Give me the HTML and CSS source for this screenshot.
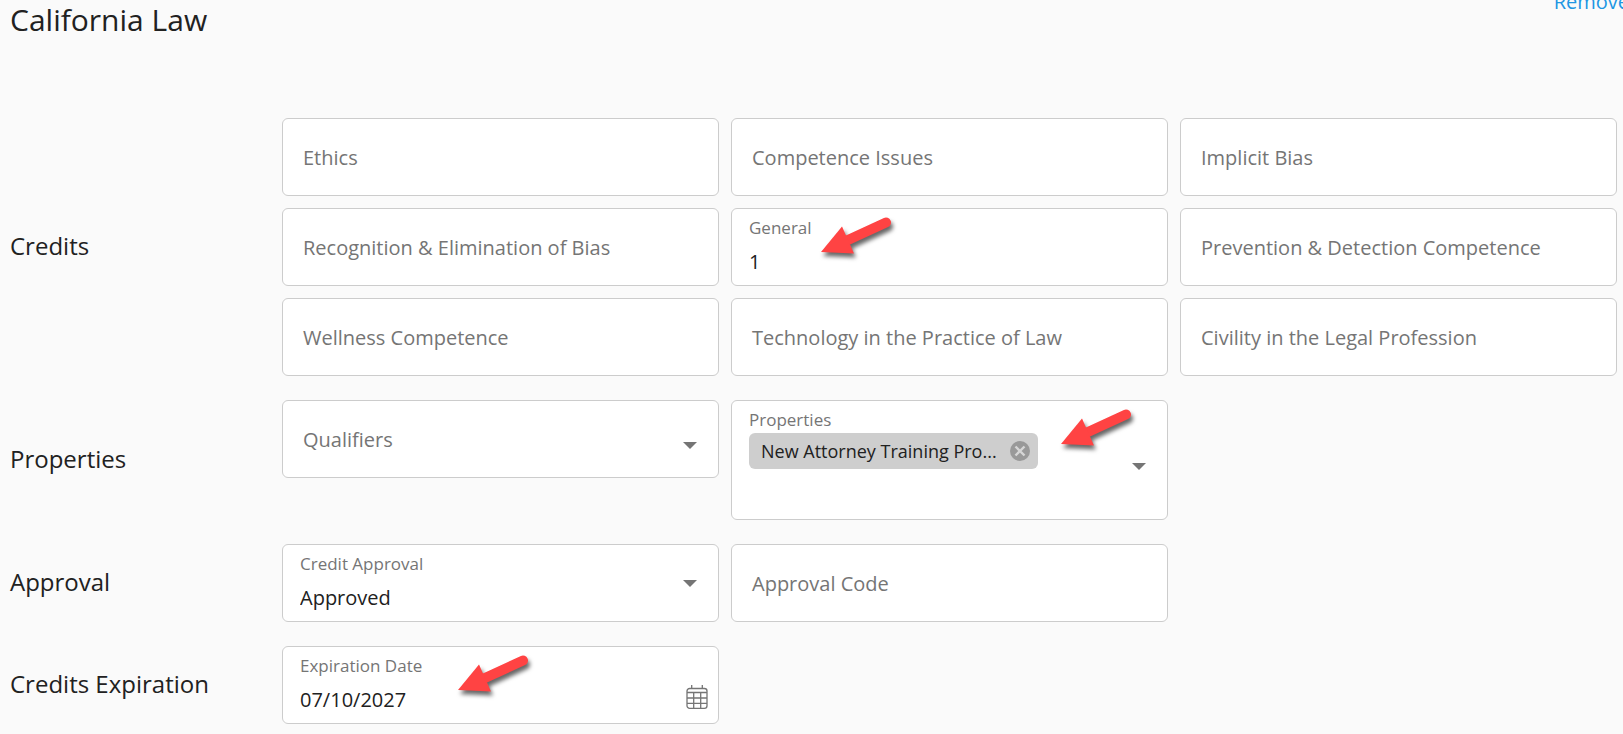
FILE: index.html
```html
<!DOCTYPE html>
<html lang="en">
<head>
<meta charset="utf-8">
<title>California Law</title>
<link rel="stylesheet" href="styles.css">
</head>
<body>
<svg class="defs" aria-hidden="true">
  <symbol id="arrow" viewBox="0 0 84 52">
    <path d="M31 24 69 6.5" fill="none" stroke="#ff4343" stroke-width="10" stroke-linecap="round"/>
    <path d="M4 36 25 10.5 37 37.5Z" fill="#ff4343"/>
  </symbol>
</svg>
<form class="page">
  <header class="header">
    <h1 class="title">California Law</h1>
    <a class="remove" href="#">Remove</a>
  </header>

  <section class="group">
    <h2 class="group-name">Credits</h2>
    <div class="fields">
      <label class="field empty"><span class="label">Ethics</span><input class="control" type="text"></label>
      <label class="field empty"><span class="label">Competence Issues</span><input class="control" type="text"></label>
      <label class="field empty"><span class="label">Implicit Bias</span><input class="control" type="text"></label>
      <label class="field empty"><span class="label">Recognition &amp; Elimination of Bias</span><input class="control" type="text"></label>
      <div class="field filled">
        <label class="label" for="general">General</label>
        <input class="control" id="general" type="text" value="1">
        <svg class="arrow arrow-general" aria-hidden="true"><use href="#arrow"/></svg>
      </div>
      <label class="field empty"><span class="label">Prevention &amp; Detection Competence</span><input class="control" type="text"></label>
      <label class="field empty"><span class="label">Wellness Competence</span><input class="control" type="text"></label>
      <label class="field empty"><span class="label">Technology in the Practice of Law</span><input class="control" type="text"></label>
      <label class="field empty"><span class="label">Civility in the Legal Profession</span><input class="control" type="text"></label>
    </div>
  </section>

  <section class="group">
    <h2 class="group-name">Properties</h2>
    <div class="fields">
      <label class="field empty multi">
        <span class="label">Qualifiers</span>
        <select class="control"><option value=""></option></select>
        <span class="caret"></span>
      </label>
      <div class="field filled multi">
        <label class="label" for="properties">Properties</label>
        <div class="chips">
          <span class="chip">
            <span class="chip-text">New Attorney Training Pro...</span>
            <button class="chip-remove" type="button" aria-label="Remove property">
              <svg viewBox="0 0 20 20" width="20" height="20" aria-hidden="true"><circle cx="10" cy="10" r="10" fill="#999"/><path d="M5.5 5.5 14.5 14.5M14.5 5.5 5.5 14.5" stroke="#d6d6d6" stroke-width="2.4"/></svg>
            </button>
          </span>
          <input class="control" id="properties" type="text" role="combobox" aria-expanded="false">
        </div>
        <span class="caret"></span>
        <svg class="arrow arrow-properties" aria-hidden="true"><use href="#arrow"/></svg>
      </div>
    </div>
  </section>

  <section class="group">
    <h2 class="group-name">Approval</h2>
    <div class="fields">
      <div class="field filled">
        <label class="label" for="approval">Credit Approval</label>
        <select class="control" id="approval"><option>Approved</option></select>
        <span class="caret"></span>
      </div>
      <label class="field empty"><span class="label">Approval Code</span><input class="control" type="text"></label>
    </div>
  </section>

  <section class="group">
    <h2 class="group-name">Credits Expiration</h2>
    <div class="fields">
      <div class="field filled">
        <label class="label" for="expiration">Expiration Date</label>
        <input class="control" id="expiration" type="text" value="07/10/2027">
        <button class="calendar" type="button" aria-label="Open calendar">
          <svg viewBox="0 0 22 24" width="22" height="24" fill="none" stroke="#757575" stroke-width="1.3" aria-hidden="true">
            <rect x="1" y="3.5" width="20" height="19.8" rx="2.6"/>
            <path d="M1 7.5H21M1 13H21M1 18.3H21M7.7 7.5V23.3M14.7 7.5V23.3M5.7 0V3.5M16.3 0V3.5"/>
          </svg>
        </button>
        <svg class="arrow arrow-expiration" aria-hidden="true"><use href="#arrow"/></svg>
      </div>
    </div>
  </section>
</form>
</body>
</html>
```
FILE: styles.css
```css
* {
  box-sizing: border-box;
}

body {
  margin: 0;
  overflow: hidden;
  background: #fafafa;
  color: #212121;
  font-family: "Open Sans", "Noto Sans", sans-serif;
}

.defs {
  display: none;
}

.page {
  display: flex;
  flex-direction: column;
  gap: 24px;
  padding: 0 6px 10px 10px;
}

.header {
  display: flex;
  justify-content: space-between;
  align-items: flex-start;
  margin-bottom: 54px;
}

.title {
  margin: 0;
  font-size: 30px;
  font-weight: 400;
  line-height: 40px;
}

.remove {
  margin: -12px -12px 0 0;
  color: #2196e3;
  font-size: 20px;
  line-height: 28px;
  text-decoration: none;
}

.group {
  display: grid;
  grid-template-columns: 272px 1fr;
  align-items: center;
}

.group-name {
  margin: 0;
  padding-bottom: 2px;
  font-size: 24px;
  font-weight: 400;
  line-height: 32px;
}

.fields {
  display: grid;
  grid-template-columns: repeat(3, 1fr);
  align-items: start;
  gap: 12px;
}

.field {
  position: relative;
  display: grid;
  grid-template-columns: minmax(0, 1fr) auto;
  min-height: 78px;
  border: 1px solid #ccc;
  border-radius: 6px;
  background: #fff;
}

.label {
  color: #757575;
  pointer-events: none;
}

.control {
  width: 100%;
  margin: 0;
  padding: 0 17px;
  border: 0;
  outline: 0;
  appearance: none;
  background: transparent;
  color: #212121;
  font: inherit;
  font-size: 20px;
  line-height: 28px;
}

.empty .label,
.empty .control {
  grid-area: 1 / 1;
}

.empty .label {
  align-self: center;
  padding: 2px 20px 0;
  font-size: 20px;
  line-height: 28px;
}

.filled {
  grid-template-rows: 20px auto;
  row-gap: 10px;
  padding: 9px 0;
}

.filled .label {
  grid-area: 1 / 1;
  padding: 0 17px;
  font-size: 17px;
  line-height: 20px;
}

.filled > .control {
  grid-area: 2 / 1;
  height: 28px;
}

.filled.multi {
  row-gap: 3px;
}

.caret {
  grid-area: 1 / 2 / -1 / 3;
  align-self: center;
  width: 14px;
  margin-right: 21px;
  border: 7px solid transparent;
  border-top-color: #757575;
  border-bottom: 0;
  pointer-events: none;
}

.multi .caret {
  margin-top: 12px;
}

.chips {
  grid-area: 2 / 1;
  display: flex;
  flex-direction: column;
  align-items: flex-start;
  gap: 13px;
  padding-left: 17px;
}

.chips .control {
  height: 28px;
  padding: 0;
}

.chip {
  display: flex;
  align-items: center;
  gap: 13px;
  height: 36px;
  padding: 0 8px 0 12px;
  border-radius: 6px;
  background: #cecece;
}

.chip-text {
  font-size: 18px;
  line-height: 24px;
}

.chip-remove,
.calendar {
  display: flex;
  padding: 0;
  border: 0;
  background: transparent;
}

.calendar {
  grid-area: 1 / 2 / -1 / 3;
  align-self: end;
  margin: 0 10px 5px 0;
}

.arrow {
  position: absolute;
  top: 7px;
  width: 84px;
  height: 52px;
  filter: drop-shadow(2px 4px 2px rgba(0, 0, 0, 0.6));
  pointer-events: none;
}

.arrow-general {
  left: 85px;
}

.arrow-properties {
  left: 325px;
}

.arrow-expiration {
  left: 171px;
}
```
